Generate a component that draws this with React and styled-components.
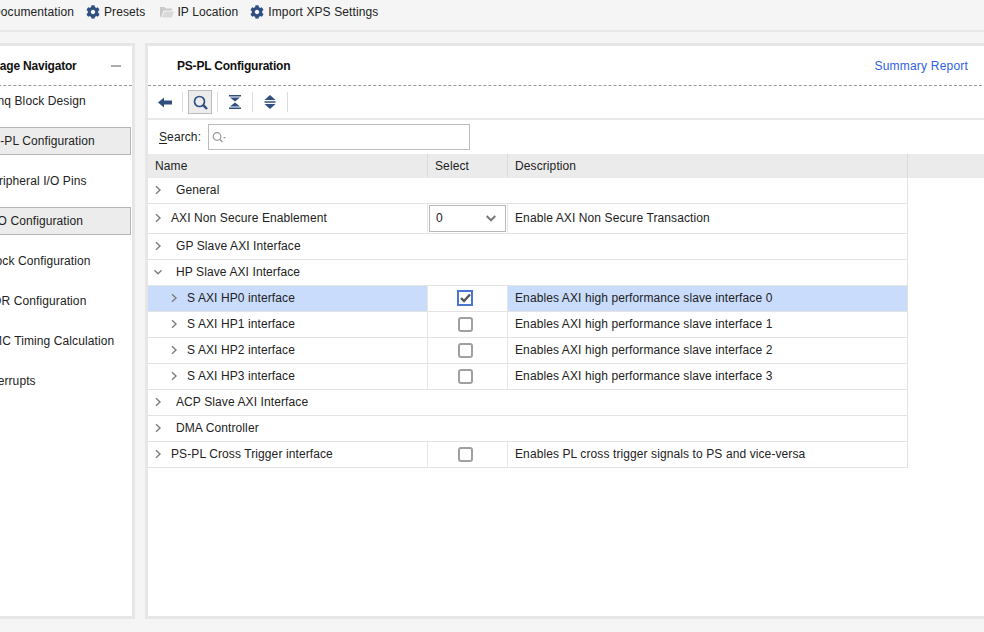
import React from 'react';
import styled, { createGlobalStyle } from 'styled-components';
import { FaCog } from 'react-icons/fa';

const GlobalStyle = createGlobalStyle`
  html, body {
    margin: 0;
    padding: 0;
    background: #f5f5f5;
  }
  body {
    font-family: "Liberation Sans", Arial, sans-serif;
    font-size: 12px;
    letter-spacing: 0.1px;
    color: #222;
  }
`;

const Page = styled.div`
  width: 984px;
  height: 632px;
  overflow: hidden;
  display: flex;
  flex-direction: column;
  background: #f5f5f5;
`;

const TopBar = styled.div`
  flex: none;
  height: 24px;
  margin-left: -8px;
  display: flex;
  align-items: center;
  gap: 12px;
  border-bottom: 2px solid #e8e8e8;
  padding-bottom: 6px;
`;

const TopItem = styled.div`
  display: flex;
  align-items: center;
  gap: ${(p) => (p.$folder ? 3 : 4)}px;
  margin-left: ${(p) => (p.$folder ? 3 : 0)}px;
  white-space: nowrap;
  svg { flex: none; }
`;

const Body = styled.div`
  flex: 1;
  min-height: 0;
  display: flex;
  gap: 10px;
  padding: 11px 0 13px;
`;

const Panel = styled.div`
  background: #fff;
  border: 3px solid #e6e6e6;
  box-sizing: border-box;
  display: flex;
  flex-direction: column;
`;

const Sidebar = styled(Panel)`
  flex: none;
  width: 175px;
  margin-left: -40px;
`;

const Main = styled(Panel)`
  flex: none;
  width: 860px;
`;

const PanelHead = styled.div`
  flex: none;
  height: 39px;
  display: flex;
  align-items: center;
  justify-content: space-between;
  border-bottom: 1px dashed #999;
  padding-left: ${(p) => p.$left}px;
  padding-right: ${(p) => p.$right}px;
`;

const Title = styled.div`
  font-weight: bold;
  letter-spacing: -0.2px;
  color: #111;
  white-space: nowrap;
`;

const Dash = styled.div`
  width: 10px;
  height: 2px;
  background: #adadad;
`;

const SummaryLink = styled.a`
  color: #2f5fe0;
  letter-spacing: 0.2px;
`;

const NavList = styled.div`
  display: flex;
  flex-direction: column;
  padding: 1px 1px 0 0;
`;

const NavItem = styled.div`
  height: 28px;
  margin-bottom: 12px;
  display: flex;
  align-items: center;
  padding-left: 21px;
  box-sizing: border-box;
  white-space: nowrap;
  ${(p) => p.$active && `
    background: #ececec;
    border: 1px solid #b5b5b5;
    padding-left: 20px;
  `}
`;

const Toolbar = styled.div`
  flex: none;
  height: 32px;
  display: flex;
  align-items: center;
  padding-left: 5px;
  border-bottom: 2px solid #e8e8e8;
`;

const ToolButton = styled.div`
  width: 24px;
  height: 24px;
  display: flex;
  align-items: center;
  justify-content: center;
  box-sizing: border-box;
  ${(p) => p.$on && `
    background: #ececec;
    border: 1px solid #bdbdbd;
  `}
`;

const ToolSep = styled.div`
  width: 1px;
  height: 20px;
  background: #dcdcdc;
  margin: 0 5px;
`;

const SearchRow = styled.div`
  flex: none;
  height: 34px;
  display: flex;
  align-items: center;
  padding-left: 11px;
  gap: 7px;
`;

const SearchLabel = styled.label`
  u { text-underline-offset: 2px; }
`;

const SearchBox = styled.div`
  width: 262px;
  height: 26px;
  box-sizing: border-box;
  border: 1px solid #bcbcbc;
  display: flex;
  align-items: center;
  padding-left: 3px;
`;

const TableHead = styled.div`
  flex: none;
  height: 24px;
  background: #ebebeb;
  display: grid;
  grid-template-columns: 280px 80px 400px 1fr;
`;

const HeadCell = styled.div`
  display: flex;
  align-items: center;
  padding-left: 7px;
  border-right: 1px solid #dcdcdc;
  &:last-child { border-right: none; }
`;

const Table = styled.div`
  width: 760px;
  border-right: 1px solid #e3e3e3;
  box-sizing: border-box;
`;

const Row = styled.div`
  height: ${(p) => p.$h || 26}px;
  display: grid;
  grid-template-columns: 279px 81px 1fr;
  border-bottom: 1px solid #e3e3e3;
  box-sizing: border-box;
`;

const NameCell = styled.div`
  display: flex;
  align-items: center;
  padding-left: ${(p) => p.$indent || 0}px;
  padding-bottom: 1px;
  white-space: nowrap;
  grid-column: ${(p) => (p.$wide ? '1 / -1' : 'auto')};
  background: ${(p) => (p.$sel ? '#c9dcfb' : 'transparent')};
`;

const Arrow = styled.span`
  width: ${(p) => p.$w}px;
  flex: none;
  display: flex;
  align-items: center;
`;

const SelectCell = styled.div`
  display: flex;
  align-items: center;
  justify-content: center;
  border-left: 1px solid #e6e6e6;
  border-right: 1px solid #e6e6e6;
`;

const DescCell = styled.div`
  display: flex;
  align-items: center;
  padding-left: 7px;
  padding-bottom: 1px;
  white-space: nowrap;
  background: ${(p) => (p.$sel ? '#c9dcfb' : 'transparent')};
`;

const Combo = styled.div`
  width: 77px;
  height: 27px;
  box-sizing: border-box;
  border: 1px solid #b8b8b8;
  display: flex;
  align-items: center;
  justify-content: space-between;
  padding: 0 9px 1px 6px;
`;

const Check = styled.div`
  width: ${(p) => (p.$on ? 16 : 15)}px;
  height: ${(p) => (p.$on ? 16 : 15)}px;
  margin: 0 5px 1px 0;
  box-sizing: border-box;
  border-radius: ${(p) => (p.$on ? 0 : 3)}px;
  border: 2px solid ${(p) => (p.$on ? '#4a77cf' : '#a0a0a0')};
  background: #fff;
  display: flex;
  align-items: center;
  justify-content: center;
`;

const Chevron = ({ open }) => (
  <svg width="10" height="10" viewBox="0 0 10 10" fill="none" stroke="#7d7d7d" strokeWidth="1.4">
    {open ? <path d="M1.5 3.2 5 6.7 8.5 3.2" /> : <path d="M3 1.2 7 5 3 8.8" />}
  </svg>
);

const Gear = () => <FaCog size={14} color="#2f4f80" />;

const Folder = () => (
  <svg width="14" height="12" viewBox="0 0 14 12">
    <path d="M0 1h4.5l1 1.5H12V4.5H3.5L1.2 11H0z" fill="#c9c9c9" />
    <path d="M4.2 5.5H14L11.8 11.5H2z" fill="#d9d9d9" />
  </svg>
);

const BackIcon = () => (
  <svg width="14" height="11" viewBox="0 0 14 11">
    <path d="M0 5.5 6 0.5V3.5H14V7.5H6V10.5z" fill="#2f4f80" />
  </svg>
);

const SearchIcon = () => (
  <svg width="15" height="15" viewBox="0 0 15 15" fill="none" stroke="#2f4f80">
    <circle cx="6.5" cy="6.5" r="5" strokeWidth="1.7" />
    <path d="M10.2 10.2 14 14" strokeWidth="2.4" />
  </svg>
);

const CollapseIcon = () => (
  <svg width="12" height="14" viewBox="0 0 12 14" fill="#2f4f80">
    <path d="M0 0h12v1.4H0zM1 2.4h10L6 6.4zM6 7.6l5 4H1zM0 12.6h12V14H0z" />
  </svg>
);

const ExpandIcon = () => (
  <svg width="12" height="14" viewBox="0 0 12 14" fill="#2f4f80">
    <path d="M6 0 11.5 5H0.5zM0.5 6.2h11v1.5H0.5zM0.5 9h11L6 14z" />
  </svg>
);

const SmallSearch = () => (
  <svg width="15" height="13" viewBox="0 0 15 13" fill="none" stroke="#9a9a9a">
    <circle cx="5" cy="5.5" r="3.8" strokeWidth="1.2" />
    <path d="M7.8 8.3 10.4 11" strokeWidth="1.5" />
    <path d="M11 6h3.2L12.6 7.6z" fill="#9a9a9a" stroke="none" />
  </svg>
);

const Tick = () => (
  <svg width="11" height="10" viewBox="0 0 11 10" fill="none" stroke="#555" strokeWidth="2.4">
    <path d="M1 5 4 8 10 1.5" />
  </svg>
);

const navItems = [
  { label: 'Zynq Block Design' },
  { label: 'PS-PL Configuration', active: true },
  { label: 'Peripheral I/O Pins' },
  { label: 'MIO Configuration', active: true },
  { label: 'Clock Configuration' },
  { label: 'DDR Configuration' },
  { label: 'SMC Timing Calculation' },
  { label: 'Interrupts' },
];

const hpRows = [
  { name: 'S AXI HP0 interface', on: true, desc: 'Enables AXI high performance slave interface 0' },
  { name: 'S AXI HP1 interface', desc: 'Enables AXI high performance slave interface 1' },
  { name: 'S AXI HP2 interface', desc: 'Enables AXI high performance slave interface 2' },
  { name: 'S AXI HP3 interface', desc: 'Enables AXI high performance slave interface 3' },
];

const GroupRow = ({ label, open }) => (
  <Row>
    <NameCell $wide $indent={5}>
      <Arrow $w={23}><Chevron open={open} /></Arrow>
      {label}
    </NameCell>
  </Row>
);

export default function App() {
  return (
    <Page>
      <GlobalStyle />
      <TopBar>
        <TopItem>Documentation</TopItem>
        <TopItem><Gear />Presets</TopItem>
        <TopItem $folder><Folder />IP Location</TopItem>
        <TopItem><Gear />Import XPS Settings</TopItem>
      </TopBar>
      <Body>
        <Sidebar>
          <PanelHead $left={29} $right={11}>
            <Title>Page Navigator</Title>
            <Dash />
          </PanelHead>
          <NavList>
            {navItems.map((item) => (
              <NavItem key={item.label} $active={item.active}>{item.label}</NavItem>
            ))}
          </NavList>
        </Sidebar>
        <Main>
          <PanelHead $left={29} $right={34}>
            <Title>PS-PL Configuration</Title>
            <SummaryLink>Summary Report</SummaryLink>
          </PanelHead>
          <Toolbar>
            <ToolButton><BackIcon /></ToolButton>
            <ToolSep />
            <ToolButton $on><SearchIcon /></ToolButton>
            <ToolSep />
            <ToolButton><CollapseIcon /></ToolButton>
            <ToolSep />
            <ToolButton><ExpandIcon /></ToolButton>
            <ToolSep />
          </Toolbar>
          <SearchRow>
            <SearchLabel><u>S</u>earch:</SearchLabel>
            <SearchBox><SmallSearch /></SearchBox>
          </SearchRow>
          <TableHead>
            <HeadCell>Name</HeadCell>
            <HeadCell>Select</HeadCell>
            <HeadCell>Description</HeadCell>
            <HeadCell />
          </TableHead>
          <Table>
            <GroupRow label="General" />
            <Row $h={30}>
              <NameCell $indent={5}>
                <Arrow $w={18}><Chevron /></Arrow>
                AXI Non Secure Enablement
              </NameCell>
              <SelectCell>
                <Combo>
                  0
                  <svg width="10" height="7" viewBox="0 0 10 7" fill="none" stroke="#7a7a7a" strokeWidth="2">
                    <path d="M0.7 1 5 5.3 9.3 1" />
                  </svg>
                </Combo>
              </SelectCell>
              <DescCell>Enable AXI Non Secure Transaction</DescCell>
            </Row>
            <GroupRow label="GP Slave AXI Interface" />
            <GroupRow label="HP Slave AXI Interface" open />
            {hpRows.map((row) => (
              <Row key={row.name}>
                <NameCell $indent={21} $sel={row.on}>
                  <Arrow $w={18}><Chevron /></Arrow>
                  {row.name}
                </NameCell>
                <SelectCell>
                  <Check $on={row.on}>{row.on && <Tick />}</Check>
                </SelectCell>
                <DescCell $sel={row.on}>{row.desc}</DescCell>
              </Row>
            ))}
            <GroupRow label="ACP Slave AXI Interface" />
            <GroupRow label="DMA Controller" />
            <Row>
              <NameCell $indent={5}>
                <Arrow $w={18}><Chevron /></Arrow>
                PS-PL Cross Trigger interface
              </NameCell>
              <SelectCell><Check /></SelectCell>
              <DescCell>Enables PL cross trigger signals to PS and vice-versa</DescCell>
            </Row>
          </Table>
        </Main>
      </Body>
    </Page>
  );
}
